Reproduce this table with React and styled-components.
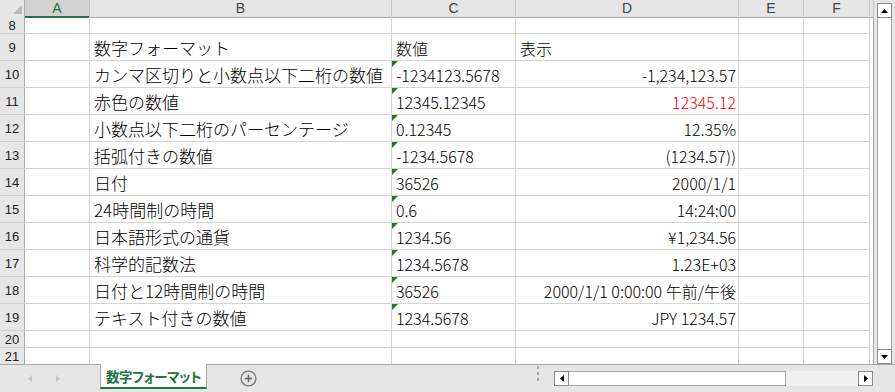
import React from 'react'
import styled, { createGlobalStyle } from 'styled-components'

const GlobalStyle = createGlobalStyle`
  html, body { margin:0; padding:0; background:#fff; }
  body {
    width:895px;
    height:392px;
    overflow:hidden;
    font-family:"Noto Sans CJK JP", sans-serif;
  }
`

const GRID = '25px 65px 302px 124px 223px 65px 66px 4px'
const HEADERS = ['A', 'B', 'C', 'D', 'E', 'F']

const ROWS = [
  { n: 8, h: 17 },
  { n: 9, h: 27, label: '数字フォーマット', value: '数値', shown: '表示', head: true },
  { n: 10, h: 27, label: 'カンマ区切りと小数点以下二桁の数値', value: '-1234123.5678', shown: '-1,234,123.57' },
  { n: 11, h: 27, label: '赤色の数値', value: '12345.12345', shown: '12345.12', red: true },
  { n: 12, h: 27, label: '小数点以下二桁のパーセンテージ', value: '0.12345', shown: '12.35%' },
  { n: 13, h: 27, label: '括弧付きの数値', value: '-1234.5678', shown: '(1234.57))' },
  { n: 14, h: 27, label: '日付', value: '36526', shown: '2000/1/1' },
  { n: 15, h: 27, label: '24時間制の時間', value: '0.6', shown: '14:24:00' },
  { n: 16, h: 27, label: '日本語形式の通貨', value: '1234.56', shown: '¥1,234.56' },
  { n: 17, h: 27, label: '科学的記数法', value: '1234.5678', shown: '1.23E+03' },
  { n: 18, h: 27, label: '日付と12時間制の時間', value: '36526', shown: '2000/1/1 0:00:00 午前/午後' },
  { n: 19, h: 27, label: 'テキスト付きの数値', value: '1234.5678', shown: 'JPY 1234.57' },
  { n: 20, h: 17 },
  { n: 21, h: 16, last: true },
]

const App = () => {
  return (
    <Wrap>
      <GlobalStyle />
      <Main>
        <Sheet>
          <HeaderRow>
            <Corner>
              <svg width="9" height="9" viewBox="0 0 9 9">
                <polygon points="9,0 9,9 0,9" fill="#b9b9b9" />
              </svg>
            </Corner>
            {HEADERS.map((c) => (
              <ColHead key={c} selected={c === 'A'}>{c}</ColHead>
            ))}
            <ColHead />
          </HeaderRow>
          {ROWS.map((r) => (
            <Row key={r.n} h={r.h}>
              <RowHead last={r.last}>{r.n}</RowHead>
              <Cell last={r.last} />
              <LabelCell last={r.last}>{r.label}</LabelCell>
              <ValueCell last={r.last} flag={r.value && !r.head}>{r.value}</ValueCell>
              <ShownCell last={r.last} right={!r.head} red={r.red}>{r.shown}</ShownCell>
              <Cell last={r.last} />
              <Cell last={r.last} />
              <Stub />
            </Row>
          ))}
        </Sheet>
        <VScroll>
          <ArrowBox>
            <svg width="7" height="4" viewBox="0 0 7 4"><polygon points="0,4 7,4 3.5,0" fill="#000" /></svg>
          </ArrowBox>
          <VThumb />
          <ArrowBox>
            <svg width="7" height="4" viewBox="0 0 7 4"><polygon points="0,0 7,0 3.5,4" fill="#000" /></svg>
          </ArrowBox>
        </VScroll>
      </Main>

      <TabBar>
        <Nav>
          <svg width="4" height="7" viewBox="0 0 4 7"><polygon points="4,0 4,7 0,3.5" fill="#c3c3c3" /></svg>
          <svg width="4" height="7" viewBox="0 0 4 7"><polygon points="0,0 0,7 4,3.5" fill="#c3c3c3" /></svg>
        </Nav>
        <Tab>数字フォーマット</Tab>
        <AddArea>
          <svg width="17" height="17" viewBox="0 0 17 17">
            <circle cx="8.5" cy="8.5" r="7.4" fill="none" stroke="#777" strokeWidth="1.3" />
            <path d="M8.5 4.8v7.4M4.8 8.5h7.4" stroke="#666" strokeWidth="1.6" />
          </svg>
        </AddArea>
        <Spacer />
        <Grip>
          <span /><span /><span />
        </Grip>
        <HScroll>
          <HArrow>
            <svg width="4" height="7" viewBox="0 0 4 7"><polygon points="4,0 4,7 0,3.5" fill="#000" /></svg>
          </HArrow>
          <HThumb />
          <HTrack />
          <HArrow>
            <svg width="4" height="7" viewBox="0 0 4 7"><polygon points="0,0 0,7 4,3.5" fill="#000" /></svg>
          </HArrow>
        </HScroll>
        <Tail />
      </TabBar>
    </Wrap>
  )
}

const Wrap = styled.div`
  width:895px;
  height:392px;
  display:flex;
  flex-direction:column;
  background:#e6e6e6;
`
const Main = styled.div`
  display:flex;
  height:364px;
`
const Sheet = styled.div`
  width:874px;
  background:#fff;
  display:flex;
  flex-direction:column;
`
const HeaderRow = styled.div`
  display:grid;
  grid-template-columns:${GRID};
  height:17px;
`
const Corner = styled.div`
  background:#e6e6e6;
  border-right:1px solid #ababab;
  border-bottom:1px solid #ababab;
  box-sizing:border-box;
  display:flex;
  align-items:flex-end;
  justify-content:flex-end;
  padding:0 2px 3px 0;
`
const ColHead = styled.div`
  box-sizing:border-box;
  background:${(p) => (p.selected ? '#d2d2d2' : '#e6e6e6')};
  color:${(p) => (p.selected ? '#217346' : '#444')};
  border-right:1px solid #c4c4c4;
  border-bottom:${(p) => (p.selected ? '2px solid #217346' : '1px solid #ababab')};
  font-family:"Liberation Sans", Arial, sans-serif;
  font-size:14px;
  line-height:16px;
  text-align:center;
`
const Row = styled.div`
  display:grid;
  grid-template-columns:${GRID};
  height:${(p) => p.h}px;
`
const RowHead = styled.div`
  box-sizing:border-box;
  background:#e6e6e6;
  border-right:1px solid #ababab;
  border-bottom:${(p) => (p.last ? 'none' : '1px solid #d0d0d0')};
  font-family:"Liberation Sans", Arial, sans-serif;
  font-size:13px;
  color:#222;
  display:flex;
  align-items:center;
  justify-content:center;
`
const Cell = styled.div`
  position:relative;
  box-sizing:border-box;
  border-right:1px solid #d4d4d4;
  border-bottom:${(p) => (p.last ? 'none' : '1px solid #d4d4d4')};
  display:flex;
  align-items:center;
  padding:1px 3px 0 4px;
  white-space:nowrap;
  overflow:hidden;
  color:#000;
  font-weight:300;
`
const LabelCell = styled(Cell)`
  font-size:17px;
`
const ValueCell = styled(Cell)`
  font-size:16px;
  &::before {
    content:'';
    display:${(p) => (p.flag ? 'block' : 'none')};
    position:absolute;
    top:0;
    left:0;
    border-top:6px solid #1a7f1a;
    border-right:6px solid transparent;
  }
`
const ShownCell = styled(Cell)`
  font-size:16px;
  justify-content:${(p) => (p.right ? 'flex-end' : 'flex-start')};
  padding-right:2px;
  color:${(p) => (p.red ? '#ff0000' : '#000')};
`
const Stub = styled.div`
  border-right:1px solid #a6a6a6;
`
const VScroll = styled.div`
  flex:1;
  display:flex;
  flex-direction:column;
  padding:3px 3px 0 3px;
`
const ArrowBox = styled.div`
  height:15px;
  box-sizing:border-box;
  background:#fff;
  border:1px solid #8a8a8a;
  display:flex;
  align-items:center;
  justify-content:center;
`
const VThumb = styled.div`
  flex:1;
  background:#fff;
  border-left:1px solid #a6a6a6;
  border-right:1px solid #a6a6a6;
`
const TabBar = styled.div`
  height:28px;
  box-sizing:border-box;
  border-top:1px solid #a6a6a6;
  display:flex;
  align-items:flex-start;
`
const Nav = styled.div`
  width:100px;
  height:100%;
  display:flex;
  align-items:center;
  gap:24px;
  padding-left:28px;
  box-sizing:border-box;
`
const Tab = styled.div`
  width:107px;
  height:25px;
  margin-top:-1px;
  box-sizing:border-box;
  background:#fff;
  border-left:1px solid #ababab;
  border-right:1px solid #ababab;
  border-bottom:2px solid #217346;
  color:#217346;
  font-weight:bold;
  font-size:13.5px;
  letter-spacing:-0.4px;
  font-feature-settings:"palt";
  display:flex;
  align-items:center;
  justify-content:center;
  padding-top:1px;
`
const AddArea = styled.div`
  width:82px;
  height:100%;
  display:flex;
  align-items:center;
  justify-content:center;
`
const Spacer = styled.div`
  flex:1;
`
const Grip = styled.div`
  width:24px;
  height:100%;
  box-sizing:border-box;
  padding:1px 8px 0 0;
  display:flex;
  flex-direction:column;
  align-items:center;
  gap:3px;
  span {
    width:2px;
    height:3px;
    background:#a8a8a8;
  }
`
const HScroll = styled.div`
  width:319px;
  height:15px;
  margin-top:6px;
  display:flex;
  background:#f0f0f0;
`
const HArrow = styled.div`
  width:15px;
  box-sizing:border-box;
  background:#fff;
  border:1px solid #8a8a8a;
  display:flex;
  align-items:center;
  justify-content:center;
`
const HThumb = styled.div`
  width:217px;
  box-sizing:border-box;
  background:#fff;
  border:1px solid #a6a6a6;
  border-left:none;
`
const HTrack = styled.div`
  flex:1;
`
const Tail = styled.div`
  width:22px;
`

export default App
